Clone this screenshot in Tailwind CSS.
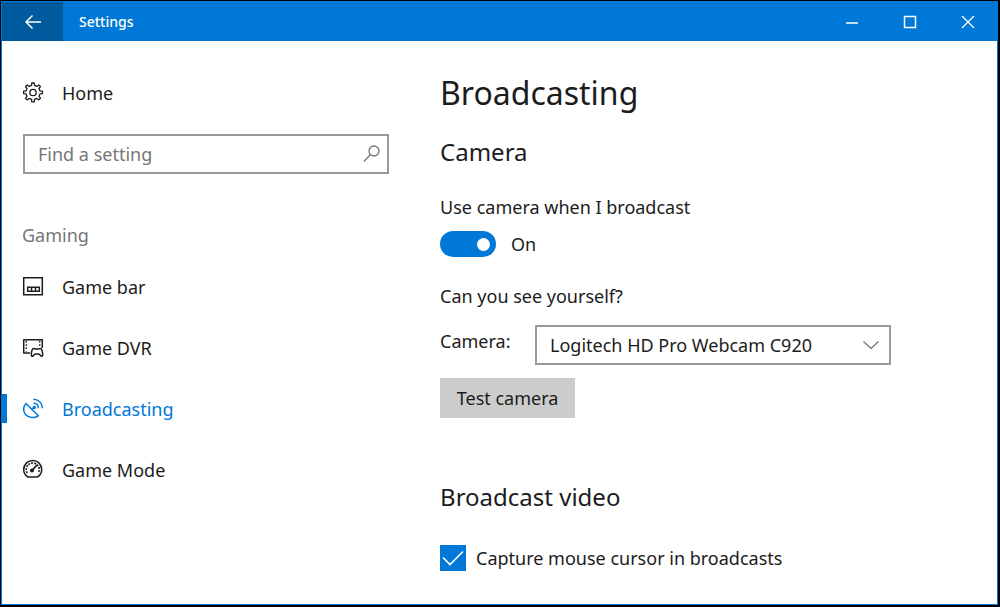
<!DOCTYPE html>
<html lang="en">
<head>
    <meta charset="UTF-8">
    <meta name="viewport" content="width=device-width, initial-scale=1.0">
    <title>Settings</title>
    <script src="https://cdn.jsdelivr.net/npm/@tailwindcss/browser@4"></script>
</head>
<body class="bg-black font-['Segoe_UI','Noto_Sans',sans-serif] text-lg leading-7 text-[#1c1c1c]">
    <div class="min-h-screen flex flex-col pt-px pl-px pr-0.5 pb-0.5">
        <div class="flex-1 flex flex-col bg-white border border-[#0078d7]">
            <!-- Title bar -->
            <header class="flex h-[39px] bg-[#0078d7] text-white">
                <button class="w-[61px] bg-[#005a9e] flex items-center justify-center" aria-label="Back">
                    <svg class="w-4 h-4" viewBox="0 0 16 16" fill="none" stroke="currentColor" stroke-width="1.5"><path d="M16 8H1M7.5 1.5 1 8l6.5 6.5"/></svg>
                </button>
                <h1 class="flex-1 self-center pl-4 text-sm font-medium">Settings</h1>
                <button class="w-[58px] flex items-center justify-center" aria-label="Minimize">
                    <svg class="w-3.5 h-3.5" viewBox="0 0 14 14" fill="none" stroke="currentColor" stroke-width="1.5"><path d="M1 8h12"/></svg>
                </button>
                <button class="w-[58px] flex items-center justify-center" aria-label="Maximize">
                    <svg class="w-3.5 h-3.5" viewBox="0 0 14 14" fill="none" stroke="currentColor" stroke-width="1.5"><path d="M1.5 1.5h11v11h-11z"/></svg>
                </button>
                <button class="w-[58px] flex items-center justify-center" aria-label="Close">
                    <svg class="w-3.5 h-3.5" viewBox="0 0 14 14" fill="none" stroke="currentColor" stroke-width="1.3"><path d="m1 1 12 12M13 1 1 13"/></svg>
                </button>
            </header>

            <div class="flex-1 flex">
                <!-- Sidebar -->
                <aside class="w-[39%] pt-[21px] pr-px">
                    <a href="#" class="flex items-center h-[61px] pl-5 gap-[18px]">
                        <svg class="w-[22px] h-[22px]" viewBox="0 0 22 22" fill="none" stroke="currentColor" stroke-width="1.3" stroke-linejoin="round">
                            <path d="M9.5 3.4 9.8 1h2.4l.3 2.4 2.4 1 1.9-1.5 1.7 1.7-1.5 1.9 1 2.4 2.4.3v2.4l-2.4.3-1 2.4 1.5 1.9-1.7 1.7-1.9-1.5-2.4 1-.3 2.4H9.8l-.3-2.4-2.4-1-1.9 1.5-1.7-1.7L5 14.3l-1-2.4-2.4-.3V9.2L4 8.9l1-2.4-1.5-1.9 1.7-1.7 1.9 1.5z"/>
                            <circle cx="11" cy="10.5" r="3.2"/>
                        </svg>
                        Home
                    </a>
                    <div class="relative ml-[21px] mt-[11px]">
                        <input type="text" aria-label="Find a setting" placeholder="Find a setting" class="block w-full h-10 border-2 border-[#999] pl-[13px] pr-10 placeholder:text-[#767676] outline-none focus:border-[#0078d7]">
                        <svg class="absolute right-2 top-[11px] w-[18px] h-[18px] text-[#767676]" viewBox="0 0 18 18" fill="none" stroke="currentColor" stroke-width="1.3"><circle cx="11" cy="6" r="5"/><path d="M7.5 9.5 1 16.500"/></svg>
                    </div>
                    <h2 class="pl-5 mt-[47px] mb-[7px] text-[#767676]">Gaming</h2>
                    <nav>
                        <a href="#" class="flex items-center h-[61px] pl-5 gap-[18px]">
                            <svg class="w-[22px] h-[22px]" viewBox="0 0 22 22" fill="none" stroke="currentColor" stroke-width="1.5"><path d="M1.7 1.7h18.600v17H1.700z"/><path d="M5.700 11.300h11.600v4H5.700zM9.500 11.300v4M13.500 11.300v4"/></svg>
                            Game bar
                        </a>
                        <a href="#" class="flex items-center h-[61px] pl-5 gap-[18px]">
                            <svg class="w-[22px] h-[22px]" viewBox="0 0 22 22" fill="none" stroke="currentColor" stroke-width="1.5" stroke-linejoin="round">
                                <path d="M8 16H1.7V2.7h18.6V11"/>
                                <path d="M4.300 4v10.500M17.700 4v6" stroke-dasharray="1.500 1.800"/>
                                <path d="M11 11.7c1-.5 2 .3 3 .3h2c1 0 2-.8 3-.3 1.200.8 2.200 6 1.300 7.300-1.200 1.200-2.300-1.800-3.600-2h-3.400c-1.300.2-2.400 3.200-3.600 2-.9-1.300.1-6.500 1.300-7.300z"/>
                            </svg>
                            Game DVR
                        </a>
                        <a href="#" class="relative flex items-center h-[61px] pl-5 gap-[18px] text-[#0078d7]" aria-current="page">
                            <span class="absolute left-0 inset-y-4 w-[5px] bg-[#0078d7]"></span>
                            <svg class="w-[22px] h-[22px]" viewBox="0 0 22 22" fill="none" stroke="currentColor" stroke-width="1.5" stroke-linejoin="round">
                                <path d="M4 5.500C1 8.500.8 13.500 3.700 16.700s8.800 4 12.600 1.100z"/>
                                <path d="m9.500 12 2.700-2.700"/>
                                <circle cx="12.300" cy="9.500" r="1" fill="currentColor"/>
                                <path d="M11.500 5.300c2.800 0 4.800 2 4.800 4.900M11.300 1.300c5 0 9 3.700 9.200 9"/>
                            </svg>
                            Broadcasting
                        </a>
                        <a href="#" class="flex items-center h-[61px] pl-5 gap-[18px]">
                            <svg class="w-[22px] h-[22px]" viewBox="0 0 22 22" fill="none" stroke="currentColor" stroke-width="1.5">
                                <path d="M6 18C3.300 16.500 1.700 13.700 1.700 10.500a9 9 0 0 1 18 0c0 3.200-1.600 6-4.300 7.500z" stroke-linejoin="round"/>
                                <path d="M5.200 14a6.500 6.500 0 1 1 11 0" stroke-dasharray="2 1"/>
                                <path d="m10 11.500 5-5.500" stroke-width="1.800"/>
                                <circle cx="10" cy="11.500" r="1.300" fill="currentColor"/>
                            </svg>
                            Game Mode
                        </a>
                    </nav>
                </aside>

                <!-- Content -->
                <main class="flex-1 pl-[50px] pr-[106px] pt-7 pb-8">
                    <h2 class="text-[32px] leading-[48px]">Broadcasting</h2>
                    <h3 class="mt-[19px] text-2xl leading-8">Camera</h3>

                    <p class="mt-[25px]" id="use-camera">Use camera when I broadcast</p>
                    <label class="mt-2.5 h-[26px] flex items-center gap-[15px]">
                        <input type="checkbox" role="switch" aria-labelledby="use-camera" checked class="peer sr-only">
                        <span class="w-14 h-[26px] rounded-full bg-[#0078d7] flex items-center justify-end pr-1.5">
                            <span class="w-[13px] h-[13px] rounded-full bg-white"></span>
                        </span>
                        On
                    </label>

                    <p class="mt-[25px]">Can you see yourself?</p>
                    <div class="mt-[15px] flex">
                        <label for="camera" class="w-[95px] pt-0.5">Camera:</label>
                        <div class="relative flex-1">
                            <select id="camera" class="block w-full h-10 appearance-none border-2 border-[#999] bg-white pl-[13px] pr-10">
                                <option>Logitech HD Pro Webcam C920</option>
                            </select>
                            <svg class="absolute right-3 top-4 w-4 h-2 pointer-events-none text-[#767676]" viewBox="0 0 16 8" fill="none" stroke="currentColor" stroke-width="1.3"><path d="m.5.5 7.500 7 7.500-7"/></svg>
                        </div>
                    </div>
                    <button class="mt-[13px] h-10 w-[135px] bg-[#ccc] hover:bg-[#bbb]">Test camera</button>

                    <h3 class="mt-[63px] text-2xl leading-8">Broadcast video</h3>
                    <label class="mt-[31px] flex items-center gap-2.5">
                        <span class="relative w-[26px] h-[26px]">
                            <input type="checkbox" checked class="block w-[26px] h-[26px] appearance-none bg-[#0078d7]">
                            <svg class="absolute inset-0 w-[26px] h-[26px] pointer-events-none" viewBox="0 0 26 26" fill="none" stroke="#fff" stroke-width="1.6"><path d="m3 12.500 7 7L23 6.500"/></svg>
                        </span>
                        Capture mouse cursor in broadcasts
                    </label>
                </main>
            </div>
        </div>
    </div>
</body>
</html>
